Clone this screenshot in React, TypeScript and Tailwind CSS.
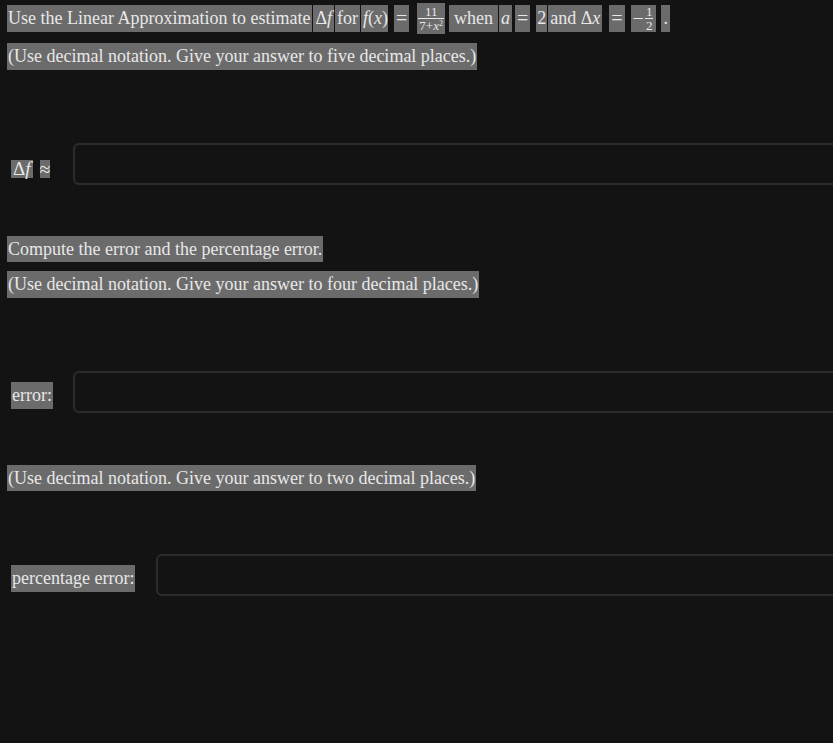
import React from 'react';

const hl = 'bg-[#6b6b6b] text-[#e8e8e8]';

function Frac({ top, bottom }: { top: React.ReactNode; bottom: React.ReactNode }) {
  return (
    <span className="mx-[1px] inline-flex flex-col items-center align-middle text-[13px] leading-[13px]">
      <span className="px-[1px]">{top}</span>
      <span className="border-t border-[#e8e8e8] px-[1px]">{bottom}</span>
    </span>
  );
}

function AnswerRow({ label, gap, top }: { label: React.ReactNode; gap: string; top: string }) {
  return (
    <div className={`flex items-center pl-[11px] ${top} ${gap}`}>
      <span className={`${hl} mt-[6px] inline-block shrink-0 whitespace-nowrap px-[1px] py-[3px] leading-[21px]`}>
        {label}
      </span>
      <div className="h-[42px] w-[900px] shrink-0 rounded-md border-2 border-[#2c2c2c] bg-[#131313]" />
    </div>
  );
}

export default function App() {
  return (
    <div
      className="h-[743px] w-[833px] overflow-hidden bg-[#131313] text-[18px] text-[#e8e8e8]"
      style={{ fontFamily: '"Liberation Serif", "Times New Roman", serif' }}
    >
      <div className="flex items-center gap-[1px] whitespace-nowrap pl-[7px] pt-[3px] leading-[21px]">
        <span className={`${hl} py-[3px] pl-[1px] pr-[2px]`}>Use the Linear Approximation to estimate</span>
        <span className={`${hl} px-[2px] py-[3px]`}>Δ<i>f</i></span>
        <span className={`${hl} px-[2px] py-[3px]`}>for</span>
        <span className={`${hl} py-[3px] pl-[2px]`}>
          <i>f</i>(<i>x</i>)
        </span>
        <span className={`${hl} ml-[5px] px-[2px] py-[3px] text-[20px]`}>=</span>
        <span className={`${hl} ml-[7px] flex h-[31px] items-center`}>
          <Frac top="11" bottom={<>7+<i>x</i><sup className="text-[8px]">2</sup></>} />
        </span>
        <span className={`${hl} ml-[3px] px-[5px] py-[3px]`}>when</span>
        <span className={`${hl} px-[2px] py-[3px]`}><i>a</i></span>
        <span className={`${hl} ml-[2px] px-[2px] py-[3px] text-[20px]`}>=</span>
        <span className={`${hl} ml-[5px] px-[1px] py-[3px]`}>2</span>
        <span className={`${hl} px-[2px] py-[3px]`}>and Δ<i>x</i></span>
        <span className={`${hl} ml-[6px] px-[2px] py-[3px] text-[20px]`}>=</span>
        <span className={`${hl} ml-[5px] flex h-[27px] items-center px-[2px] text-[20px]`}>
          −<Frac top="1" bottom="2" />
        </span>
        <span className={`${hl} ml-[4px] px-[2px] py-[3px]`}>.</span>
      </div>

      <div className="mt-[9px] pl-[7px] leading-[21px]">
        <span className={`${hl} inline-block px-[1px] py-[3px]`}>
          (Use decimal notation. Give your answer to five decimal places.)
        </span>
      </div>

      <div className="mt-[73px] flex items-center pl-[11px]">
        <span className={`${hl} mt-[10px] inline-block w-[23px] px-[2px] text-[19px] leading-[18px]`}>
          Δ<i>f</i>
        </span>
        <span className={`${hl} ml-[7px] mt-[10px] inline-block w-[12px] text-center text-[20px] leading-[18px]`}>
          ≈
        </span>
        <div className="ml-[23px] h-[42px] w-[900px] shrink-0 rounded-md border-2 border-[#2c2c2c] bg-[#131313]" />
      </div>

      <div className="mt-[51px] pl-[7px] leading-[20px]">
        <span className={`${hl} inline-block px-[1px] py-[3px]`}>Compute the error and the percentage error.</span>
      </div>
      <div className="mt-[9px] pl-[7px] leading-[21px]">
        <span className={`${hl} inline-block px-[1px] py-[3px]`}>
          (Use decimal notation. Give your answer to four decimal places.)
        </span>
      </div>

      <AnswerRow label="error:" gap="gap-[20px]" top="mt-[73px]" />

      <div className="mt-[52px] pl-[7px] leading-[20px]">
        <span className={`${hl} inline-block px-[1px] py-[3px]`}>
          (Use decimal notation. Give your answer to two decimal places.)
        </span>
      </div>

      <AnswerRow label="percentage error:" gap="gap-[21px]" top="mt-[63px]" />
    </div>
  );
}
